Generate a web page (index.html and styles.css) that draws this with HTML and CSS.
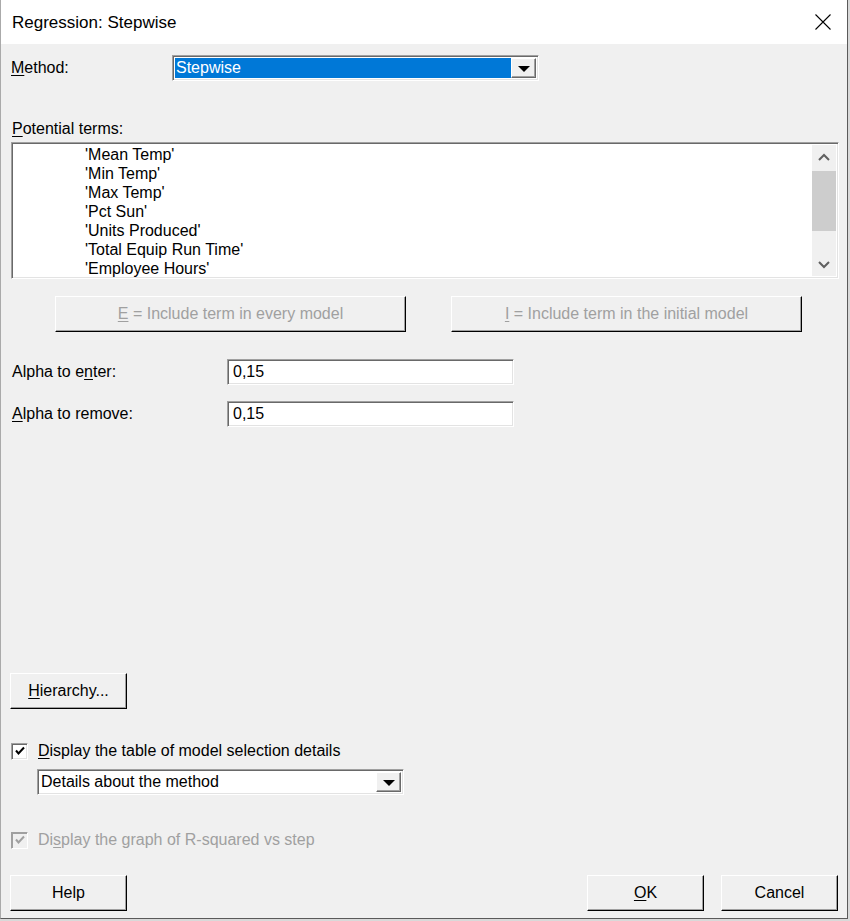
FILE: index.html
```html
<!DOCTYPE html>
<html>
<head>
<meta charset="utf-8">
<link rel="stylesheet" href="styles.css">
<title>Regression: Stepwise</title>
</head>
<body>
<div class="dialog">
  <div class="titlebar">
    <span class="title">Regression: Stepwise</span>
    <svg class="close" width="16" height="16" viewBox="0 0 16 16"><path d="M0.5 0.5 L15.5 15.5 M15.5 0.5 L0.5 15.5" stroke="#000" stroke-width="1.1" fill="none"/></svg>
  </div>
  <div class="content">
    <div class="row method-row">
      <span class="label method-label"><u>M</u>ethod:</span>
      <div class="combo method-combo">
        <div class="combo-value selected">Stepwise</div>
        <div class="combo-btn"><span class="tri"></span></div>
      </div>
    </div>

    <div class="label terms-label"><u>P</u>otential terms:</div>
    <div class="listbox">
      <div class="items">
        <div class="item">'Mean Temp'</div>
        <div class="item">'Min Temp'</div>
        <div class="item">'Max Temp'</div>
        <div class="item">'Pct Sun'</div>
        <div class="item">'Units Produced'</div>
        <div class="item">'Total Equip Run Time'</div>
        <div class="item">'Employee Hours'</div>
      </div>
      <div class="scrollbar">
        <svg class="arrow" width="24" height="22" viewBox="0 0 24 22"><path d="M7 15 L12 10 L17 15" stroke="#606060" stroke-width="2" fill="none"/></svg>
        <div class="thumb"></div>
        <div class="track"></div>
        <svg class="arrow" width="24" height="22" viewBox="0 0 24 22"><path d="M7 8 L12 13 L17 8" stroke="#606060" stroke-width="2" fill="none"/></svg>
      </div>
    </div>

    <div class="row include-row">
      <button class="btn disabled wide btn-e"><u>E</u> = Include term in every model</button>
      <button class="btn disabled wide btn-i"><u>I</u> = Include term in the initial model</button>
    </div>

    <div class="row alpha-row first">
      <span class="label alpha-label">Alpha to e<u>n</u>ter:</span>
      <div class="textbox">0,15</div>
    </div>
    <div class="row alpha-row second">
      <span class="label alpha-label"><u>A</u>lpha to remove:</span>
      <div class="textbox">0,15</div>
    </div>

    <button class="btn small hierarchy"><u>H</u>ierarchy...</button>

    <div class="row check-row first-check">
      <span class="checkbox"><svg width="12" height="12" viewBox="0 0 12 12"><path d="M2 5.5 L4.5 8.5 L10 2.5" stroke="#000" stroke-width="2" fill="none"/></svg></span>
      <span class="label check-label"><u>D</u>isplay the table of model selection details</span>
    </div>
    <div class="combo details-combo">
      <div class="combo-value">Details about the method</div>
      <div class="combo-btn"><span class="tri"></span></div>
    </div>

    <div class="row check-row second-check">
      <span class="checkbox disabled-box"><svg width="12" height="12" viewBox="0 0 12 12"><path d="M2 5.5 L4.5 8.5 L10 2.5" stroke="#a0a0a0" stroke-width="2" fill="none"/></svg></span>
      <span class="label check-label disabled-text">Di<u>s</u>play the graph of R-squared vs step</span>
    </div>

    <div class="row footer">
      <button class="btn small">Help</button>
      <div class="footer-right">
        <button class="btn small"><u>O</u>K</button>
        <button class="btn small">Cancel</button>
      </div>
    </div>
  </div>
</div>
</body>
</html>
```
FILE: styles.css
```css
* { box-sizing: border-box; }
html, body {
  margin: 0;
  padding: 0;
  background: #d9d9d9;
  width: 850px;
  height: 921px;
  overflow: hidden;
}
body {
  font-family: "Liberation Sans", Arial, sans-serif;
  font-size: 16px;
  color: #000;
}
u { text-decoration: underline; text-underline-offset: 2px; }

.dialog {
  width: 848px;
  height: 919px;
  background: #f0f0f0;
  border-right: 1px solid #5a5a5a;
  border-bottom: 1px solid #5a5a5a;
  border-left: 1px solid #aaaaaa;
}
.titlebar {
  height: 44px;
  background: #fff;
  display: flex;
  align-items: center;
  justify-content: space-between;
  padding: 0 16px 0 11px;
}
.title { font-size: 17px; line-height: 20px; margin-top: 1px; }
.close { display: block; }

.content {
  padding: 11px 9px 0 9px;
  display: flex;
  flex-direction: column;
}
.row { display: flex; align-items: center; }
.label { line-height: 18px; white-space: nowrap; }

.method-row { height: 26px; }
.method-label { width: 162px; padding-left: 1px; }
.combo {
  height: 26px;
  display: flex;
  background: #fff;
  border: 1px solid;
  border-color: #a0a0a0 #ffffff #ffffff #a0a0a0;
  box-shadow: inset 1px 1px 0 #696969, inset -1px -1px 0 #e3e3e3;
  padding: 2px;
}
.method-combo { width: 367px; }
.combo-value {
  flex: 1;
  line-height: 20px;
  padding-left: 1px;
}
.combo-value.selected { background: #0078d7; color: #fff; }
.combo-btn {
  width: 25px;
  height: 20px;
  background: #f0f0f0;
  border: 1px solid;
  border-color: #fff #696969 #696969 #fff;
  box-shadow: inset -1px -1px 0 #a0a0a0;
  display: flex;
  align-items: center;
  justify-content: center;
}
.tri {
  width: 0; height: 0;
  border-left: 6px solid transparent;
  border-right: 6px solid transparent;
  border-top: 6px solid #000;
  margin-top: 1px;
}

.terms-label { margin-top: 39px; padding-left: 2px; height: 18px; }
.listbox {
  margin-top: 4px;
  margin-left: 1px;
  width: 828px;
  height: 137px;
  background: #fff;
  border: 1px solid;
  border-color: #a0a0a0 #ffffff #ffffff #a0a0a0;
  box-shadow: inset 1px 1px 0 #696969, inset -1px -1px 0 #e3e3e3;
  padding: 2px;
  display: flex;
}
.items { flex: 1; padding: 0 0 0 71px; }
.item { line-height: 19px; height: 19px; font-size: 16px; }
.scrollbar {
  width: 24px;
  background: #f0f0f0;
  display: flex;
  flex-direction: column;
}
.arrow { display: block; }
.thumb { height: 60px; background: #cdcdcd; margin: 4px 0 0 0; }
.track { flex: 1; }

.include-row { margin-top: 17px; height: 36px; }
.btn {
  font-family: "Liberation Sans", Arial, sans-serif;
  font-size: 16px;
  color: #000;
  background: #f0f0f0;
  border: 1px solid;
  border-color: #ffffff #000000 #000000 #ffffff;
  box-shadow: inset -1px -1px 0 #a0a0a0;
  height: 36px;
  padding: 0;
  display: block;
}
.btn.wide { width: 351px; }
.btn.disabled { color: #a0a0a0; }
.btn-e { margin-left: 45px; }
.btn-i { margin-left: 45px; }
.btn.small { width: 117px; }

.alpha-row { height: 26px; }
.alpha-row.first { margin-top: 27px; }
.alpha-row.second { margin-top: 16px; }
.alpha-label { width: 217px; padding-left: 2px; }
.textbox {
  width: 287px;
  height: 26px;
  background: #fff;
  border: 1px solid;
  border-color: #a0a0a0 #ffffff #ffffff #a0a0a0;
  box-shadow: inset 1px 1px 0 #696969, inset -1px -1px 0 #e3e3e3;
  padding: 2px 5px;
  line-height: 20px;
}

.hierarchy { margin-top: 246px; }

.check-row { height: 18px; }
.first-check { margin-top: 33px; }
.second-check { margin-top: 36px; }
.checkbox {
  width: 17px;
  height: 17px;
  margin-left: 1px;
  background: #fff;
  border: 1px solid;
  border-color: #a0a0a0 #ffffff #ffffff #a0a0a0;
  box-shadow: inset 1px 1px 0 #696969, inset -1px -1px 0 #e3e3e3;
  display: flex;
  align-items: center;
  justify-content: center;
}
.checkbox svg { display: block; }
.checkbox.disabled-box { background: #f0f0f0; box-shadow: inset 1px 1px 0 #a0a0a0; }
.check-label { margin-left: 10px; }
.disabled-text { color: #a0a0a0; }

.details-combo { margin-top: 9px; margin-left: 27px; width: 367px; }

.footer { margin-top: 26px; height: 36px; justify-content: space-between; width: 828px; }
.footer-right { display: flex; gap: 17px; }
```
